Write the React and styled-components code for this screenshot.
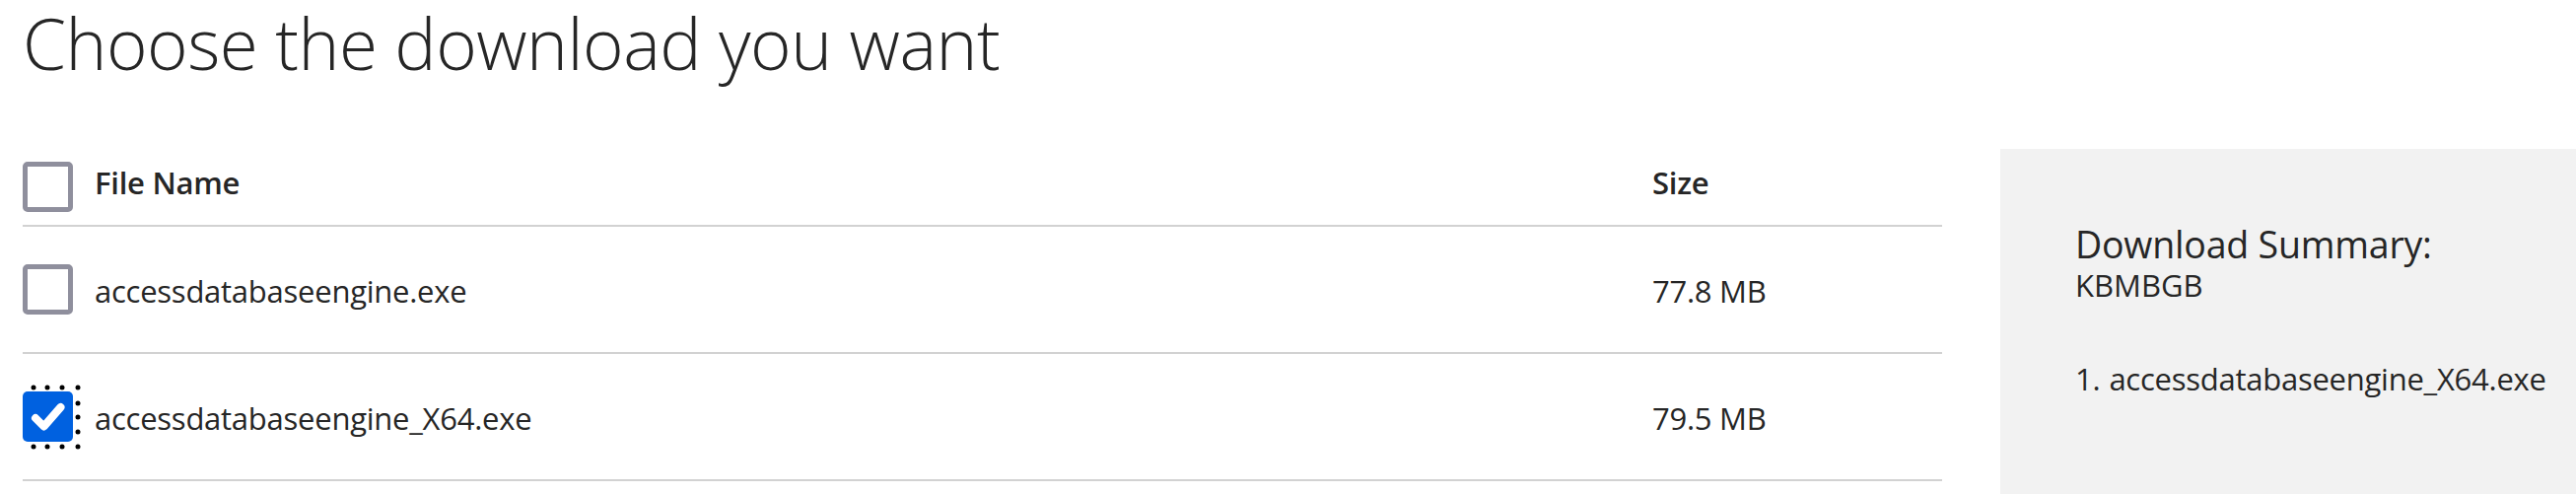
import React from "react";
import styled, { createGlobalStyle } from "styled-components";

const Global = createGlobalStyle`
  html, body { margin: 0; padding: 0; background: #ffffff; }
  body {
    font-family: "Open Sans", "Noto Sans", "Liberation Sans", sans-serif;
    color: #262626;
  }
`;

const Page = styled.div`
  width: 2613px;
  height: 501px;
  overflow: hidden;
  box-sizing: border-box;
  padding-left: 23px;
`;

const Title = styled.h1`
  margin: 0;
  height: 151px;
  box-sizing: border-box;
  padding-top: 1px;
  font-size: 71px;
  font-weight: 300;
  line-height: 1.2;
  letter-spacing: -0.5px;
  color: #262626;
  white-space: nowrap;
`;

const Content = styled.div`
  display: flex;
  align-items: flex-start;
  gap: 59px;
`;

const Table = styled.div`
  flex: none;
  width: 1947px;
`;

const Row = styled.div`
  display: grid;
  grid-template-columns: 1fr 294px;
  align-items: center;
  height: ${(p) => (p.$header ? 77 : 127)}px;
  border-bottom: 2px solid #d2d2d2;
  font-size: 31px;
  letter-spacing: -0.25px;
  font-weight: ${(p) => (p.$header ? 600 : 400)};
`;

const NameCell = styled.div`
  display: flex;
  align-items: center;
  gap: 22px;
`;

const Label = styled.span`
  margin-bottom: ${(p) => (p.$header ? 9 : 0)}px;
  margin-top: ${(p) => (p.$header ? 0 : 2)}px;
  white-space: nowrap;
`;

const CheckWrap = styled.span`
  position: relative;
  flex: none;
  width: 51px;
  height: 51px;
  display: block;
`;

const Box = styled.span`
  position: relative;
  z-index: 1;
  display: flex;
  align-items: center;
  justify-content: center;
  width: 51px;
  height: 51px;
  box-sizing: border-box;
  border-radius: 5px;
  border: ${(p) => (p.$checked ? "none" : "5px solid #8f8f9d")};
  background: ${(p) => (p.$checked ? "#0061e0" : "#ffffff")};
`;

const FocusRing = styled.svg`
  position: absolute;
  left: 0;
  top: -8px;
  width: 64px;
  height: 68px;
  overflow: visible;
`;

const Summary = styled.aside`
  flex: 1;
  height: 360px;
  box-sizing: border-box;
  padding: 75px 0 0 76px;
  background: #f2f2f2;
`;

const SummaryTitle = styled.h2`
  margin: 0;
  font-size: 37.5px;
  font-weight: 400;
  line-height: 44px;
  letter-spacing: -0.2px;
  white-space: nowrap;
`;

const Code = styled.div`
  margin-top: 4px;
  font-size: 31px;
  line-height: 31px;
`;

const List = styled.ol`
  margin: 60px 0 0;
  padding: 0;
  list-style: none;
  font-size: 31px;
  line-height: 38px;
  letter-spacing: -0.25px;
`;

const Item = styled.li`
  display: flex;
  gap: 9px;
  white-space: nowrap;
`;

const Check = ({ checked, focused }) => (
  <CheckWrap>
    {focused && (
      <FocusRing viewBox="0 -8 64 68">
        {[11, 25, 40, 56].map((x) => (
          <circle key={"t" + x} cx={x} cy={-4} r={2.5} fill="#000" />
        ))}
        {[11, 25, 40, 56].map((x) => (
          <circle key={"b" + x} cx={x} cy={56} r={2.5} fill="#000" />
        ))}
        {[12, 26, 41].map((y) => (
          <circle key={"r" + y} cx={56} cy={y} r={2.5} fill="#000" />
        ))}
      </FocusRing>
    )}
    <Box $checked={checked}>
      {checked && (
        <svg width="51" height="51" viewBox="0 0 51 51">
          <polyline
            points="13,27 21.5,35.5 38.5,16"
            fill="none"
            stroke="#ffffff"
            strokeWidth="8"
            strokeLinecap="round"
            strokeLinejoin="round"
          />
        </svg>
      )}
    </Box>
  </CheckWrap>
);

const files = [
  { name: "accessdatabaseengine.exe", size: "77.8 MB", checked: false },
  { name: "accessdatabaseengine_X64.exe", size: "79.5 MB", checked: true },
];

export default function App() {
  return (
    <>
      <Global />
      <Page>
        <Title>Choose the download you want</Title>
        <Content>
          <Table>
            <Row $header>
              <NameCell>
                <Check />
                <Label $header>File Name</Label>
              </NameCell>
              <Label $header>Size</Label>
            </Row>
            {files.map((f) => (
              <Row key={f.name}>
                <NameCell>
                  <Check checked={f.checked} focused={f.checked} />
                  <Label>{f.name}</Label>
                </NameCell>
                <Label>{f.size}</Label>
              </Row>
            ))}
          </Table>
          <Summary>
            <SummaryTitle>Download Summary:</SummaryTitle>
            <Code>KBMBGB</Code>
            <List>
              {files
                .filter((f) => f.checked)
                .map((f, i) => (
                  <Item key={f.name}>
                    <span>{i + 1}.</span>
                    <span>{f.name}</span>
                  </Item>
                ))}
            </List>
          </Summary>
        </Content>
      </Page>
    </>
  );
}
